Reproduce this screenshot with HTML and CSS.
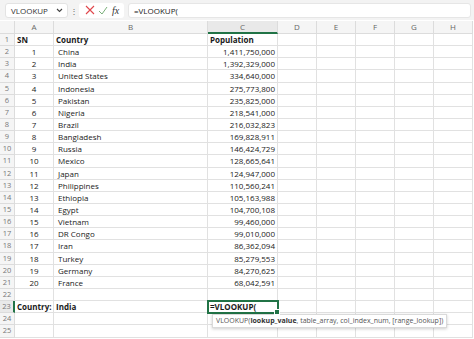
FILE: index.html
```html
<!DOCTYPE html>
<html lang="en">
<head>
  <meta charset="UTF-8">
  <meta name="viewport" content="width=device-width, initial-scale=1.0">
  <title>VLOOKUP</title>
  <link rel="stylesheet" href="styles.css">
</head>
<body>
  <div class="formula-bar">
    <div class="name-box">
      <span>VLOOKUP</span>
      <svg class="chevron" width="7" height="5" viewBox="0 0 7 5"><path d="M1 1l2.5 2.5L6 1" fill="none" stroke="#444" stroke-width="1.1"/></svg>
    </div>
    <span class="dots">⋮</span>
    <div class="tools">
      <svg width="10" height="10" viewBox="0 0 10 10"><path d="M1 1l8 8M9 1l-8 8" stroke="#e0474c" stroke-width="1.1"/></svg>
      <svg width="10" height="9" viewBox="0 0 10 9"><path d="M1 5l3 3 5-7" fill="none" stroke="#7ab07a" stroke-width="1"/></svg>
      <span class="fx">fx</span>
    </div>
    <div class="formula-input">=VLOOKUP(</div>
  </div>

  <div class="sheet" id="sheet">
    <div class="corner"></div>
    <div class="col-head">A</div>
    <div class="col-head">B</div>
    <div class="col-head selected">C</div>
    <div class="col-head">D</div>
    <div class="col-head">E</div>
    <div class="col-head">F</div>
    <div class="col-head">G</div>
    <div class="col-head">H</div>
  </div>

  <script>
    const data = [
      ["1", "China", "1,411,750,000"],
      ["2", "India", "1,392,329,000"],
      ["3", "United States", "334,640,000"],
      ["4", "Indonesia", "275,773,800"],
      ["5", "Pakistan", "235,825,000"],
      ["6", "Nigeria", "218,541,000"],
      ["7", "Brazil", "216,032,823"],
      ["8", "Bangladesh", "169,828,911"],
      ["9", "Russia", "146,424,729"],
      ["10", "Mexico", "128,665,641"],
      ["11", "Japan", "124,947,000"],
      ["12", "Philippines", "110,560,241"],
      ["13", "Ethiopia", "105,163,988"],
      ["14", "Egypt", "104,700,108"],
      ["15", "Vietnam", "99,460,000"],
      ["16", "DR Congo", "99,010,000"],
      ["17", "Iran", "86,362,094"],
      ["18", "Turkey", "85,279,553"],
      ["19", "Germany", "84,270,625"],
      ["20", "France", "68,042,591"]
    ];

    const rows = [["SN", "Country", "Population"]].concat(data);
    rows.push(["", "", ""]);
    rows.push(["Country:", "India", "=VLOOKUP("]);
    rows.push(["", "", ""]);
    rows.push(["", "", ""]);

    const sheet = document.getElementById("sheet");

    function addCell(text, cls) {
      const cell = document.createElement("div");
      cell.className = "cell " + cls;
      cell.textContent = text;
      sheet.appendChild(cell);
      return cell;
    }

    rows.forEach((row, i) => {
      const n = i + 1;
      // rows 1 and 23 are the bold label rows
      const label = n === 1 || n === 23;
      const b = label ? " bold" : "";
      addCell(n, "row-head" + (n === 23 ? " selected" : ""));
      addCell(row[0], (label ? "left" : "center") + b);
      addCell(row[1], (label ? "left" : "left indent") + b);
      const c = addCell(row[2], (label ? "left" : "right") + b);
      if (n === 23) {
        c.classList.add("active");
        const tip = document.createElement("div");
        tip.className = "tooltip";
        tip.innerHTML = "VLOOKUP(<b>lookup_value</b>, table_array, col_index_num, [range_lookup])";
        c.appendChild(tip);
      }
      for (let k = 0; k < 5; k++) addCell("", "");
    });
  </script>
</body>
</html>
```

FILE: styles.css
```css
body {
  margin: 0;
  font-family: "Open Sans", "Noto Sans", sans-serif;
  font-size: 8px;
  color: #1a1a1a;
  background: #fff;
  overflow: hidden;
}
.formula-bar {
  display: flex;
  align-items: center;
  height: 20px;
  background: #f3f3f3;
  padding: 0 3px 0 5px;
  margin-bottom: 1px;
}
.name-box {
  width: 63px;
  height: 15px;
  box-sizing: border-box;
  background: #fff;
  border: 1px solid #e3e3e3;
  border-radius: 3px;
  display: flex;
  align-items: center;
  justify-content: space-between;
  padding: 0 4px 0 5px;
  color: #333;
}
.dots {
  width: 11px;
  text-align: center;
  color: #666;
  font-size: 8px;
}
.tools {
  width: 45px;
  height: 15px;
  box-sizing: border-box;
  background: #fff;
  border-radius: 3px;
  display: flex;
  align-items: center;
  justify-content: space-around;
  padding: 0 3px 0 4px;
}
.fx {
  font-family: "Liberation Serif", serif;
  font-style: italic;
  font-size: 10px;
  color: #333;
}
.formula-input {
  flex: 1;
  height: 15px;
  margin-left: 4px;
  box-sizing: border-box;
  background: #fff;
  border: 1px solid #e6e6e6;
  border-radius: 3px;
  padding: 0 5px;
  line-height: 13px;
  color: #222;
}
.sheet {
  display: grid;
  grid-template-columns: 15px 39px 154px 70px 39px 39px 39px 39px 39px;
  grid-template-rows: 13px;
  grid-auto-rows: 12.15px;
}
.corner, .col-head, .row-head, .cell {
  box-sizing: border-box;
  border-right: 1px solid #e1e1e1;
  border-bottom: 1px solid #e1e1e1;
  white-space: nowrap;
  overflow: visible;
}
.corner, .col-head {
  background: #f5f5f5;
  border-color: #dcdcdc;
}
.col-head {
  text-align: center;
  color: #666;
  line-height: 12px;
}
.col-head.selected {
  background: #e9e9e9;
  border-bottom: 2px solid #217346;
}
.cell {
  line-height: 11px;
  padding: 0 2px;
  position: relative;
}
.row-head {
  background: #f5f5f5;
  color: #777;
  text-align: center;
  font-size: 7.5px;
  border-color: #dcdcdc;
}
.row-head.selected {
  background: #e9e9e9;
  border-right: 2px solid #217346;
}
.center { text-align: center; }
.left { text-align: left; }
.indent { padding-left: 4px; }
.right { text-align: right; }
.bold { font-weight: 700; }
.active {
  outline: 2px solid #217346;
  outline-offset: -1px;
  z-index: 2;
}
.active::after {
  content: "";
  position: absolute;
  right: -3px;
  bottom: -3px;
  width: 4px;
  height: 4px;
  background: #217346;
  border: 1px solid #fff;
}
.tooltip {
  position: absolute;
  left: 4px;
  top: 13px;
  height: 12px;
  padding: 0 3px;
  background: #fff;
  border: 1px solid #dadada;
  box-shadow: 0 1px 3px rgba(0, 0, 0, 0.2);
  font-size: 7px;
  font-weight: 400;
  line-height: 11px;
  color: #555;
}
.tooltip b {
  color: #333;
}
```
